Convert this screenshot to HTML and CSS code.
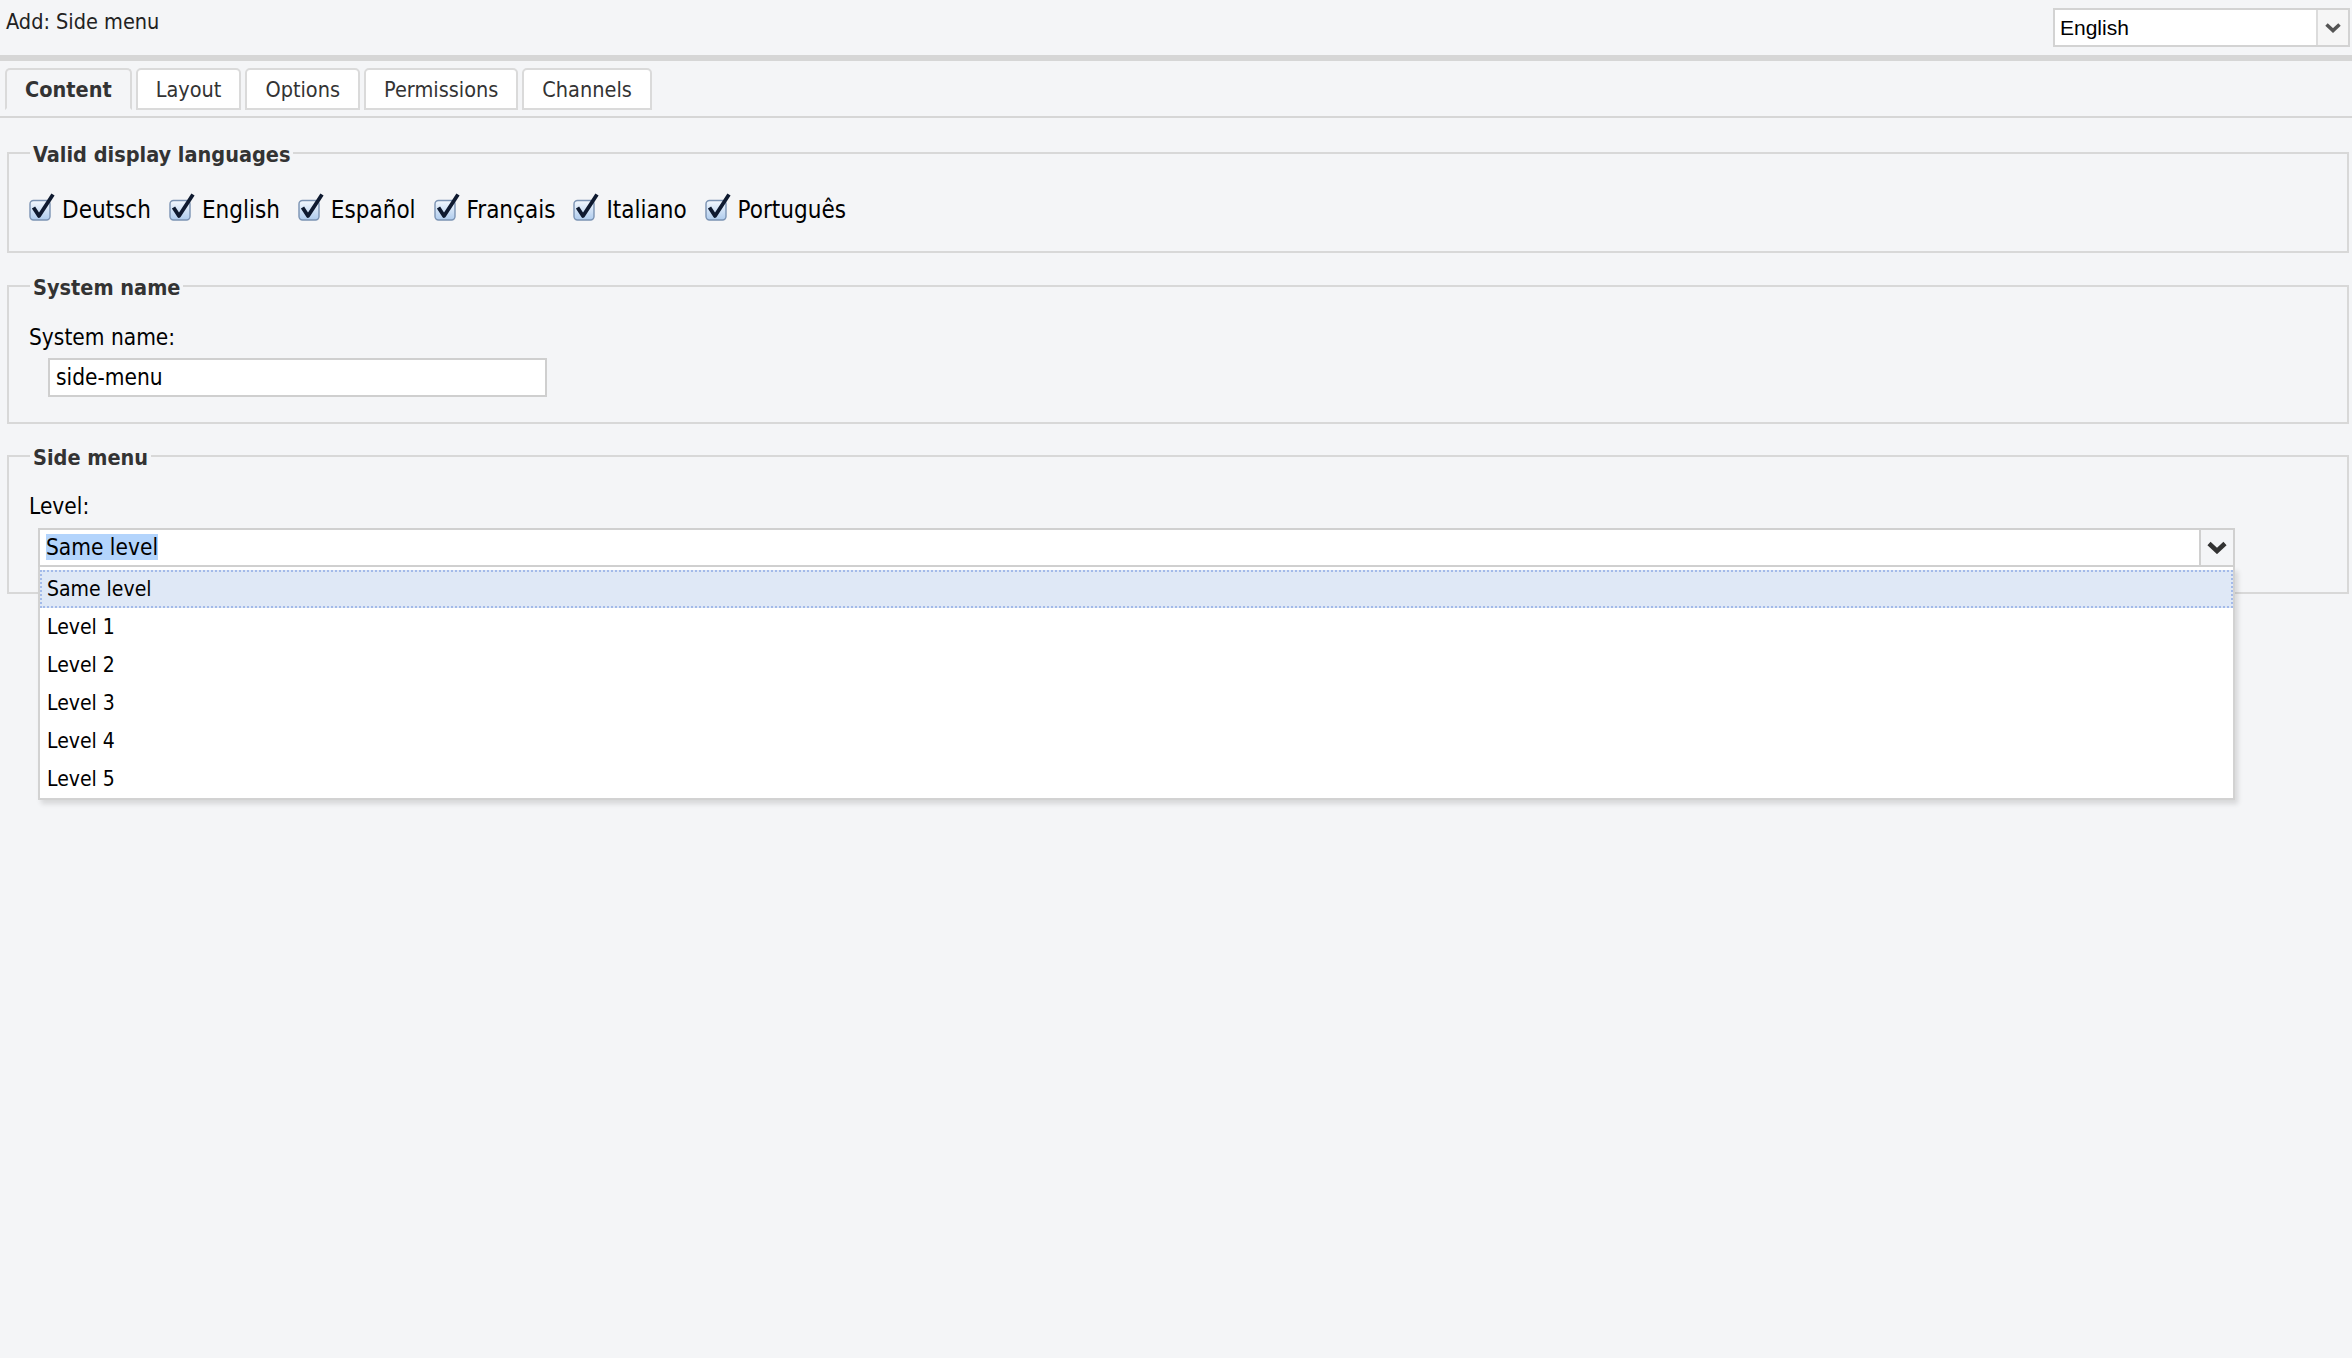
FILE: index.html
```html
<!DOCTYPE html>
<html>
<head>
<meta charset="utf-8">
<title>Add: Side menu</title>
<link rel="stylesheet" href="styles.css">
</head>
<body>
<div class="header">
  <div class="title">Add: Side menu</div>
  <div class="lang-combo">
    <div class="lang-value">English</div>
    <div class="lang-trigger">
      <svg width="18" height="11" viewBox="0 0 18 11"><path d="M2.5 2.5 L9 8.5 L15.5 2.5" fill="none" stroke="#555" stroke-width="3.6"/></svg>
    </div>
  </div>
</div>

<div class="tabbar">
  <div class="tab active">Content</div>
  <div class="tab">Layout</div>
  <div class="tab">Options</div>
  <div class="tab">Permissions</div>
  <div class="tab">Channels</div>
</div>

<div class="content">
  <section class="group group-langs">
    <div class="group-head"><span>Valid display languages</span></div>
    <div class="group-body">
      <div class="checks">
        <label class="check"><svg class="cb" width="26" height="34" viewBox="0 0 26 34"><defs><linearGradient id="cbg" x1="0" y1="0" x2="0" y2="1"><stop offset="0" stop-color="#f3f8fe"/><stop offset="1" stop-color="#aecbed"/></linearGradient></defs><rect x="1" y="7.5" width="20" height="19.5" rx="3.5" fill="url(#cbg)" stroke="#7b93b3" stroke-width="1.4"/><path d="M4.5 14.5 L10 23 L24 1.5" fill="none" stroke="#0f1a30" stroke-width="3.8" stroke-linejoin="round"/></svg>Deutsch</label>
        <label class="check"><svg class="cb" width="26" height="34" viewBox="0 0 26 34"><rect x="1" y="7.5" width="20" height="19.5" rx="3.5" fill="url(#cbg)" stroke="#7b93b3" stroke-width="1.4"/><path d="M4.5 14.5 L10 23 L24 1.5" fill="none" stroke="#0f1a30" stroke-width="3.8" stroke-linejoin="round"/></svg>English</label>
        <label class="check"><svg class="cb" width="26" height="34" viewBox="0 0 26 34"><rect x="1" y="7.5" width="20" height="19.5" rx="3.5" fill="url(#cbg)" stroke="#7b93b3" stroke-width="1.4"/><path d="M4.5 14.5 L10 23 L24 1.5" fill="none" stroke="#0f1a30" stroke-width="3.8" stroke-linejoin="round"/></svg>Español</label>
        <label class="check"><svg class="cb" width="26" height="34" viewBox="0 0 26 34"><rect x="1" y="7.5" width="20" height="19.5" rx="3.5" fill="url(#cbg)" stroke="#7b93b3" stroke-width="1.4"/><path d="M4.5 14.5 L10 23 L24 1.5" fill="none" stroke="#0f1a30" stroke-width="3.8" stroke-linejoin="round"/></svg>Français</label>
        <label class="check"><svg class="cb" width="26" height="34" viewBox="0 0 26 34"><rect x="1" y="7.5" width="20" height="19.5" rx="3.5" fill="url(#cbg)" stroke="#7b93b3" stroke-width="1.4"/><path d="M4.5 14.5 L10 23 L24 1.5" fill="none" stroke="#0f1a30" stroke-width="3.8" stroke-linejoin="round"/></svg>Italiano</label>
        <label class="check"><svg class="cb" width="26" height="34" viewBox="0 0 26 34"><rect x="1" y="7.5" width="20" height="19.5" rx="3.5" fill="url(#cbg)" stroke="#7b93b3" stroke-width="1.4"/><path d="M4.5 14.5 L10 23 L24 1.5" fill="none" stroke="#0f1a30" stroke-width="3.8" stroke-linejoin="round"/></svg>Português</label>
      </div>
    </div>
  </section>

  <section class="group group-name">
    <div class="group-head"><span>System name</span></div>
    <div class="group-body">
      <div class="field-label">System name:</div>
      <div class="text-input">side-menu</div>
    </div>
  </section>

  <section class="group group-level">
    <div class="group-head"><span>Side menu</span></div>
    <div class="group-body">
      <div class="field-label">Level:</div>
      <div class="combo-wrap">
        <div class="combo">
          <div class="combo-value"><span class="selected-text">Same level</span></div>
          <div class="combo-trigger">
            <svg width="22" height="13" viewBox="0 0 22 13"><path d="M3 2.5 L11 10 L19 2.5" fill="none" stroke="#333" stroke-width="4.6"/></svg>
          </div>
        </div>
        <ul class="picker">
          <li class="current">Same level</li>
          <li>Level 1</li>
          <li>Level 2</li>
          <li>Level 3</li>
          <li>Level 4</li>
          <li>Level 5</li>
        </ul>
      </div>
    </div>
  </section>
</div>
</body>
</html>
```

FILE: styles.css
```css
* {
    box-sizing: border-box;
}
body {
    margin: 0;
    min-height: 100vh;
    background: #f4f5f7;
    font-family: "DejaVu Sans Condensed", "DejaVu Sans", sans-serif;
    color: #000;
}

/* top bar */
.header {
    height: 61px;
    display: flex;
    justify-content: space-between;
    align-items: flex-start;
    padding: 0 2px 0 6px;
    border-bottom: 6px solid #d6d6d6;
}
.title {
    padding-top: 7px;
    font-size: 21.5px;
    line-height: 30px;
    color: #222;
}
.lang-combo {
    margin-top: 8px;
    width: 297px;
    height: 39px;
    display: flex;
    border: 2px solid #d3d3d3;
    background: #fff;
}
.lang-value {
    flex: 1;
    padding-left: 5px;
    font-family: "Liberation Sans", Arial, sans-serif;
    font-size: 21px;
    line-height: 35px;
}
.lang-trigger {
    width: 32px;
    display: flex;
    align-items: center;
    justify-content: center;
    border-left: 2px solid #dcdcdc;
    background: #f6f6f6;
}

/* tabs */
.tabbar {
    display: flex;
    gap: 4px;
    padding: 7px 0 6px 5px;
    border-bottom: 2px solid #d6d6d6;
}
.tab {
    height: 42px;
    padding: 0 18px;
    display: flex;
    align-items: center;
    font-size: 21.5px;
    color: #333;
    background: #fff;
    border: 2px solid #dadada;
    border-radius: 5px 5px 0 0;
}
.tab.active {
    font-weight: bold;
    background: #f4f5f7;
    border-bottom-color: #f4f5f7;
}

/* form groups */
.content {
    padding: 24px 3px 0 7px;
}
.group {
    margin-bottom: 21px;
}
.group-langs {
    margin-bottom: 22px;
}
.group-head {
    display: flex;
    align-items: center;
    height: 26px;
}
.group-head::before,
.group-head::after {
    content: "";
    align-self: flex-end;
    height: 14px;
    border-top: 2px solid #d8d8d8;
}
.group-head::before {
    width: 21px;
    border-left: 2px solid #d8d8d8;
}
.group-head::after {
    flex: 1;
    border-right: 2px solid #d8d8d8;
}
.group-head span {
    padding: 0 3px;
    font-weight: bold;
    font-size: 21.5px;
    line-height: 26px;
    color: #333;
}
.group-body {
    padding: 0 20px;
    border: 2px solid #d8d8d8;
    border-top: 0;
}
.group-langs .group-body {
    padding-top: 25px;
    padding-bottom: 24px;
}
.group-name .group-body {
    padding-top: 21px;
    padding-bottom: 25px;
}
.group-level .group-body {
    padding-top: 20px;
    padding-bottom: 25px;
}

.checks {
    display: flex;
    gap: 18px;
}
.check {
    display: flex;
    align-items: center;
    font-size: 24px;
    line-height: 34px;
}
.cb {
    margin-right: 7px;
}
.field-label {
    font-size: 22.5px;
    line-height: 30px;
}
.text-input {
    margin: 6px 0 0 19px;
    width: 499px;
    height: 39px;
    padding-left: 6px;
    border: 2px solid #cfcfcf;
    background: #fff;
    font-size: 22.5px;
    line-height: 35px;
}
.combo-wrap {
    position: relative;
    margin: 7px 0 0 9px;
    width: 2197px;
}
.combo {
    display: flex;
    height: 39px;
    border: 2px solid #d0d0d0;
    background: #fff;
}
.combo-value {
    flex: 1;
    padding-left: 6px;
    font-size: 22.5px;
    line-height: 35px;
}
.selected-text {
    background: #b3d4fc;
}
.combo-trigger {
    width: 34px;
    display: flex;
    align-items: center;
    justify-content: center;
    border-left: 2px solid #d0d0d0;
    background: #f4f5f7;
}

/* open dropdown list */
.picker {
    position: absolute;
    top: 100%;
    left: 0;
    right: 0;
    margin: 0;
    padding: 3px 0 0;
    list-style: none;
    background: #fff;
    border: 2px solid #d2d2d2;
    border-top: 0;
    box-shadow: 3px 4px 5px rgba(0, 0, 0, 0.12);
    z-index: 2;
}
.picker li {
    height: 38px;
    padding-left: 7px;
    font-size: 21px;
    line-height: 38px;
}
.picker li.current {
    background: #dfe8f6;
    border: 2px dotted #a3bae9;
    padding-left: 5px;
    line-height: 34px;
}
```
